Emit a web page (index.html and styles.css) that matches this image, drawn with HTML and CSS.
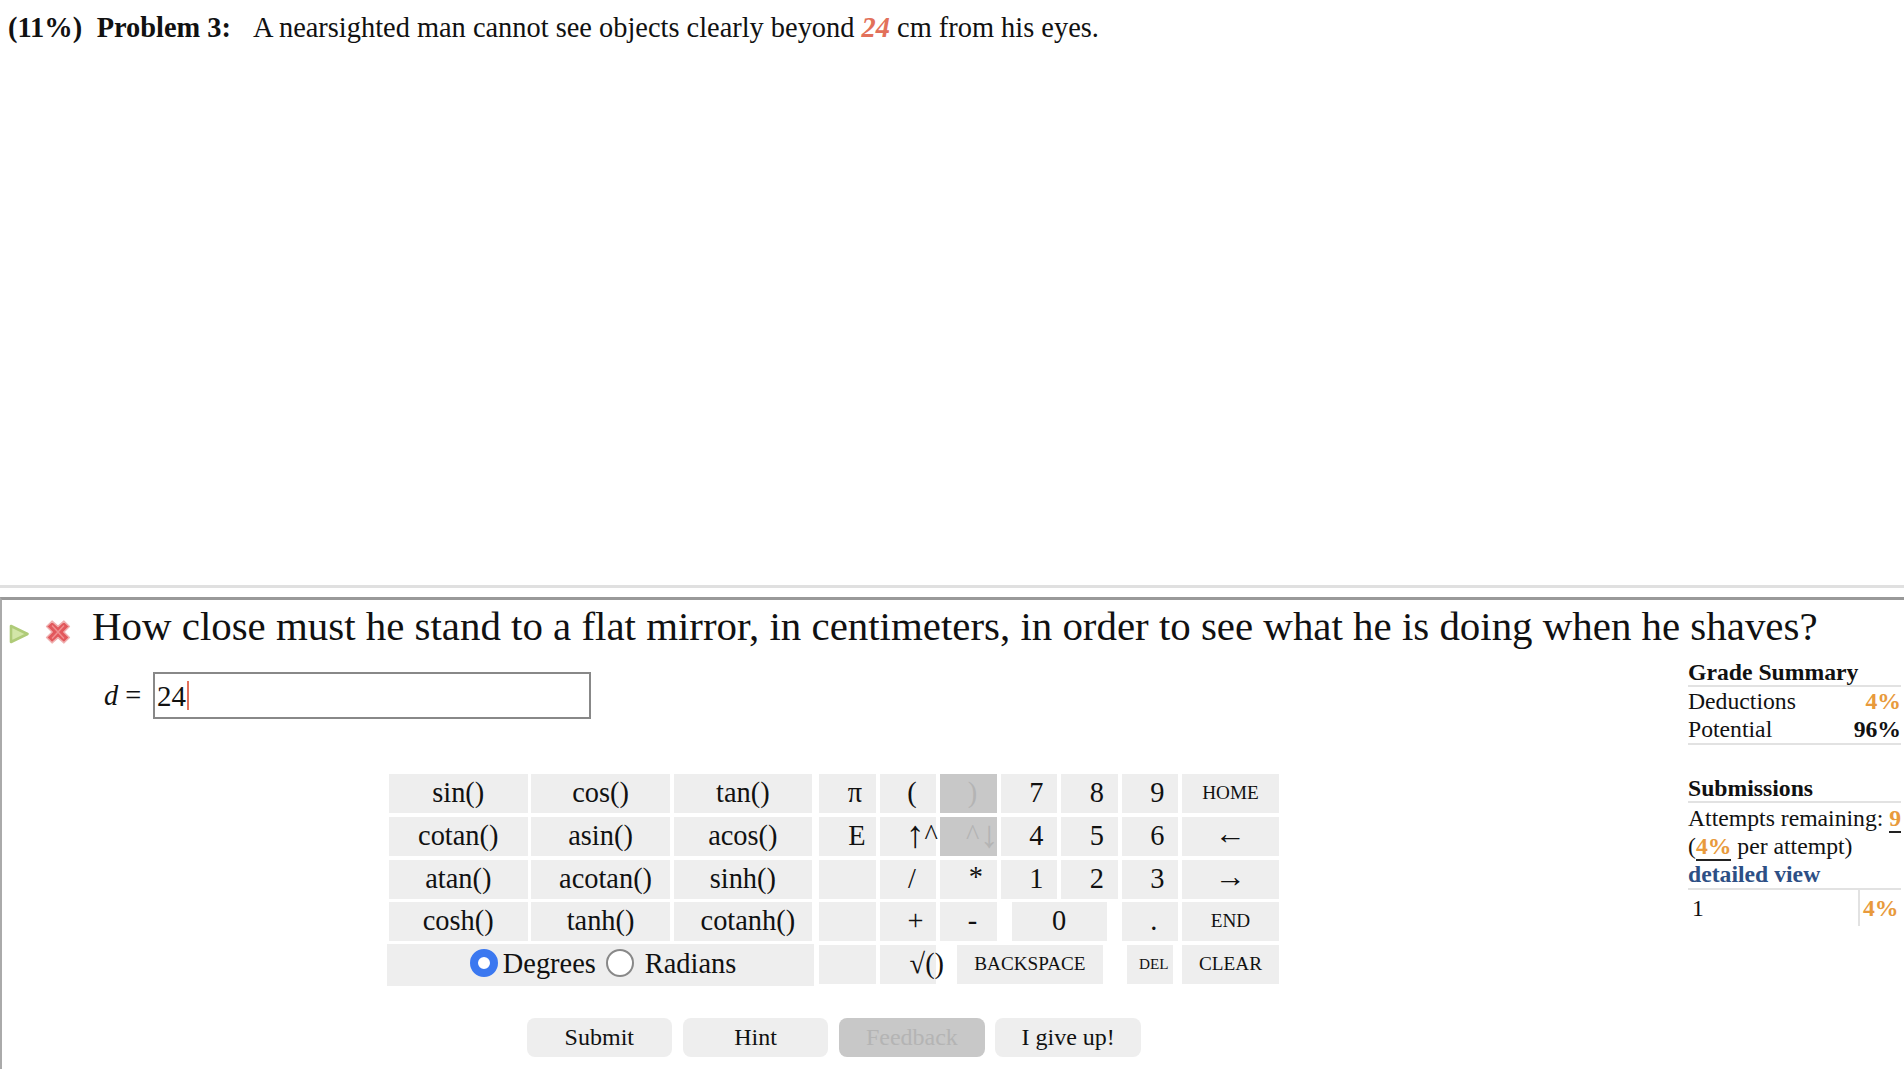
FILE: index.html
```html
<!DOCTYPE html>
<html lang="en">
<head>
<meta charset="utf-8">
<title>Problem 3</title>
<link rel="stylesheet" href="styles.css">
</head>
<body>
<header class="problem">
  <p class="statement"><b class="pct">(11%)</b><b class="label">Problem 3:</b>A nearsighted man cannot see objects clearly beyond <i class="given">24</i> cm from his eyes.</p>
</header>
<section class="panel">
  <div class="question">
    <svg class="icon play" viewBox="0 0 20 20"><path d="M2 2 L18.5 10 L2 18 Z" fill="#d3e6a8" stroke="#afcb78" stroke-width="2.6" stroke-linejoin="round"/></svg>
    <svg class="icon cross" viewBox="0 0 24 24"><path d="M6.5 2 L12 6.8 L17.5 2 L22.5 7 L17.4 12 L22.5 17 L17.5 22 L12 17.2 L6.5 22 L1.5 17 L6.6 12 L1.5 7 Z" fill="#e2585c" stroke="#efb0b0" stroke-width="1.4" stroke-linejoin="round"/><path d="M6.5 6 L17.5 18 M17.5 6 L6.5 18" stroke="#f08f90" stroke-width="1.4"/></svg>
    <h2 class="prompt">How close must he stand to a flat mirror, in centimeters, in order to see what he is doing when he shaves?</h2>
  </div>
  <div class="work">
    <div class="main">
      <div class="answer">
        <span class="var"><i>d</i> =</span>
        <div class="field">24<span class="caret"></span></div>
      </div>
      <div class="keypad">
        <div class="fn-pad">
          <div class="key">sin()</div><div class="key">cos()</div><div class="key">tan()</div>
          <div class="key">cotan()</div><div class="key">asin()</div><div class="key">acos()</div>
          <div class="key">atan()</div><div class="key long">acotan()</div><div class="key">sinh()</div>
          <div class="key">cosh()</div><div class="key">tanh()</div><div class="key long">cotanh()</div>
          <div class="key modes"><span class="radio on"></span><span class="mode">Degrees</span><span class="radio"></span><span class="mode rad">Radians</span></div>
        </div>
        <div class="calc-pad">
          <div class="key o7">π</div><div class="key o4">(</div><div class="key o4 off">)</div>
          <div class="key o6">7</div><div class="key o6">8</div><div class="key o6">9</div><div class="key cap">HOME</div>

          <div class="key o9">E</div><div class="key o13"><span class="tall">↑</span>^</div><div class="key o13 off">^<span class="tall">↓</span></div>
          <div class="key o6">4</div><div class="key o6">5</div><div class="key o6">6</div><div class="key cap arrow">←</div>

          <div class="key"></div><div class="key o4">/</div><div class="key o7 star">*</div>
          <div class="key o6">1</div><div class="key o6">2</div><div class="key o6">3</div><div class="key cap arrow">→</div>

          <div class="key"></div><div class="key o7">+</div><div class="key o4">-</div>
          <div class="key zero">0</div><div class="key o4">.</div><div class="key cap">END</div>

          <div class="key"></div><div class="key sqrt">√()</div>
          <div class="key cap back">BACKSPACE</div><div class="key cap del">DEL</div><div class="key cap">CLEAR</div>
        </div>
      </div>
      <div class="actions">
        <div class="btn">Submit</div><div class="btn">Hint</div><div class="btn btn-off">Feedback</div><div class="btn">I give up!</div>
      </div>
    </div>
    <aside class="side">
      <h3 class="side-title">Grade Summary</h3>
      <div class="side-row"><span>Deductions</span><b class="warn">4%</b></div>
      <div class="side-row ruled"><span>Potential</span><b>96%</b></div>
      <h3 class="side-title second">Submissions</h3>
      <div class="side-line">Attempts remaining: <b class="warn mark">9</b></div>
      <div class="side-line">(<b class="warn mark">4%</b> per attempt)</div>
      <div class="side-line link"><b>detailed view</b></div>
      <div class="history"><span class="idx">1</span><b class="warn">4%</b></div>
    </aside>
  </div>
</section>
</body>
</html>
```
FILE: styles.css
```css
* { box-sizing: border-box; }
html, body { margin: 0; background: #fff; }
body { font-family: "Liberation Serif", "Times New Roman", serif; color: #111; height: 1069px; overflow: hidden; }
.problem { height: 588px; border-bottom: 3px solid #e0e0e0; padding: 11px 0 0 8px; }
.statement { margin: 0; font-size: 28.4px; line-height: 34px; white-space: nowrap; }
.pct { margin-right: 14.5px; }
.label { margin-right: 22px; }
.given { color: #e2705a; font-weight: bold; }
.panel { margin-top: 9px; border-top: 3px solid #999; border-left: 2px solid #aaa; height: 472px; }
.question { display: flex; align-items: center; height: 50px; padding-left: 7px; }
.icon { flex: none; display: block; filter: blur(0.6px); }
.play { width: 20px; height: 20px; margin-top: 18px; }
.cross { width: 26px; height: 26px; margin: 14px 0 0 16px; }
.prompt { margin: 0 0 0 21px; padding-top: 4px; font-size: 40.9px; font-weight: normal; line-height: 50px; white-space: nowrap; }
.work { display: flex; height: 419px; }
.main { flex: none; width: 1686px; }
.answer { display: flex; align-items: center; margin: 22px 0 0 102px; }
.var { width: 49px; font-size: 28.4px; }
.field { width: 438px; height: 47px; border: 2px solid #888; font-size: 29px; line-height: 42px; padding-left: 2px; display: flex; align-items: center; }
.caret { width: 1.5px; height: 29px; background: #e2705a; margin-left: 1px; }
.keypad { display: flex; gap: 7px; margin: 55px 0 0 387px; }
.fn-pad { display: grid; grid-template-columns: repeat(3, 138.5px); grid-auto-rows: 39px; gap: 3.8px; }
.calc-pad { display: grid; grid-template-columns: repeat(6, 56.7px) 97px; grid-auto-rows: 39px; gap: 3.8px; }
.key { background: #eee; font-size: 28.4px; line-height: 37px; text-align: center; white-space: nowrap; }
.long { padding-left: 10px; }
.o4 { padding-left: 8px; }
.o6 { padding-left: 15px; }
.o7 { padding-left: 15px; }
.o9 { padding-left: 19px; }
.o13 { padding-left: 26px; }
.off { background: #c8c8c8; color: #b4b4b4; }
.tall { font-size: 38px; line-height: 30px; vertical-align: -2px; }
.star { line-height: 33px; }
.cap { font-size: 19.2px; line-height: 37px; }
.arrow { font-size: 31px; line-height: 33px; }
.zero { grid-column: span 2; margin: 0 11px; }
.modes { grid-column: span 3; margin: -1px -2px 0; height: 42px; padding: 0 0 4px 5px; display: flex; align-items: center; justify-content: center; }
.radio { width: 28px; height: 28px; border-radius: 50%; background: #fff; border: 2px solid #888; flex: none; }
.radio.on { border: 8px solid #3b78f0; }
.mode { margin: 0 10px 0 5px; }
.mode.rad { margin: 0 0 0 11px; }
.sqrt { padding-left: 30px; text-align: left; }
.back { grid-column: span 3; margin: 0 15px 0 17px; }
.del { font-size: 15.2px; margin: 0 5px; padding-left: 8px; }
.actions { display: flex; gap: 10.7px; margin: 34px 0 0 524.5px; }
.btn { width: 145.6px; height: 39px; background: #eee; border-radius: 8px; text-align: center; font-size: 24px; line-height: 39px; }
.btn-off { background: #c8c8c8; color: #b4b4b4; }
.side { flex: none; width: 213px; font-size: 23.7px; padding-top: 7px; }
.side-title { margin: 0; font-size: 23.7px; height: 30px; line-height: 30px; border-bottom: 2px solid #e2e2e2; }
.second { margin-top: 28px; }
.side-row { display: flex; justify-content: space-between; height: 28px; line-height: 28px; }
.ruled { border-bottom: 2px solid #e2e2e2; height: 30px; }
.side-line { height: 28px; line-height: 28px; white-space: nowrap; }
.second + .side-line { margin-top: 1px; }
.warn { color: #e89a3c; }
.mark { border-bottom: 2px solid #222; }
.link { color: #2d4f85; }
.history { display: flex; justify-content: space-between; border-top: 2px solid #e2e2e2; height: 38px; line-height: 36px; }
.idx { padding-left: 4px; }
.history .warn { width: 43px; padding-left: 3px; border-left: 2px solid #e2e2e2; }
```
